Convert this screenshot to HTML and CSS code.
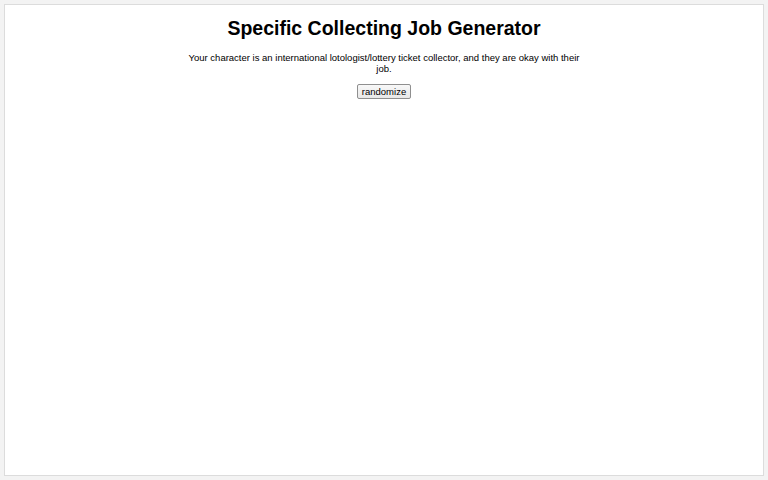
FILE: index.html
```html
<!DOCTYPE html>
<html lang="en">
<head>
<meta charset="utf-8">
<title>Specific Collecting Job Generator</title>
<link rel="stylesheet" href="styles.css">
</head>
<body>
<main class="panel">
  <h1 class="title">Specific Collecting Job Generator</h1>
  <p class="result">Your character is an international lotologist/lottery ticket collector, and they are okay with their job.</p>
  <button class="randomize" type="button">randomize</button>
</main>
</body>
</html>
```
FILE: styles.css
```css
html, body {
  margin: 0;
  height: 100%;
}

body {
  background: #f3f3f3;
  font-family: "Liberation Sans", Arial, sans-serif;
  color: #000;
  padding: 4px;
  box-sizing: border-box;
}

.panel {
  box-sizing: border-box;
  height: 472px;
  background: #fff;
  border: 1px solid #dcdcdc;
  display: flex;
  flex-direction: column;
  align-items: center;
  padding-top: 12px;
}

.title {
  font-size: 19.5px;
  font-weight: bold;
  margin: 0 0 13px;
  line-height: 22px;
}

.result {
  font-size: 9.5px;
  line-height: 11px;
  max-width: 400px;
  text-align: center;
  margin: 0 0 10px;
}

.randomize {
  font-family: "Liberation Sans", Arial, sans-serif;
  font-size: 9.5px;
  padding: 2px 4px 1px;
  line-height: 10px;
  background: linear-gradient(#f8f8f8, #e8e8e8);
  border: 1px solid #8f8f8f;
  border-radius: 2px;
  color: #000;
}
```
